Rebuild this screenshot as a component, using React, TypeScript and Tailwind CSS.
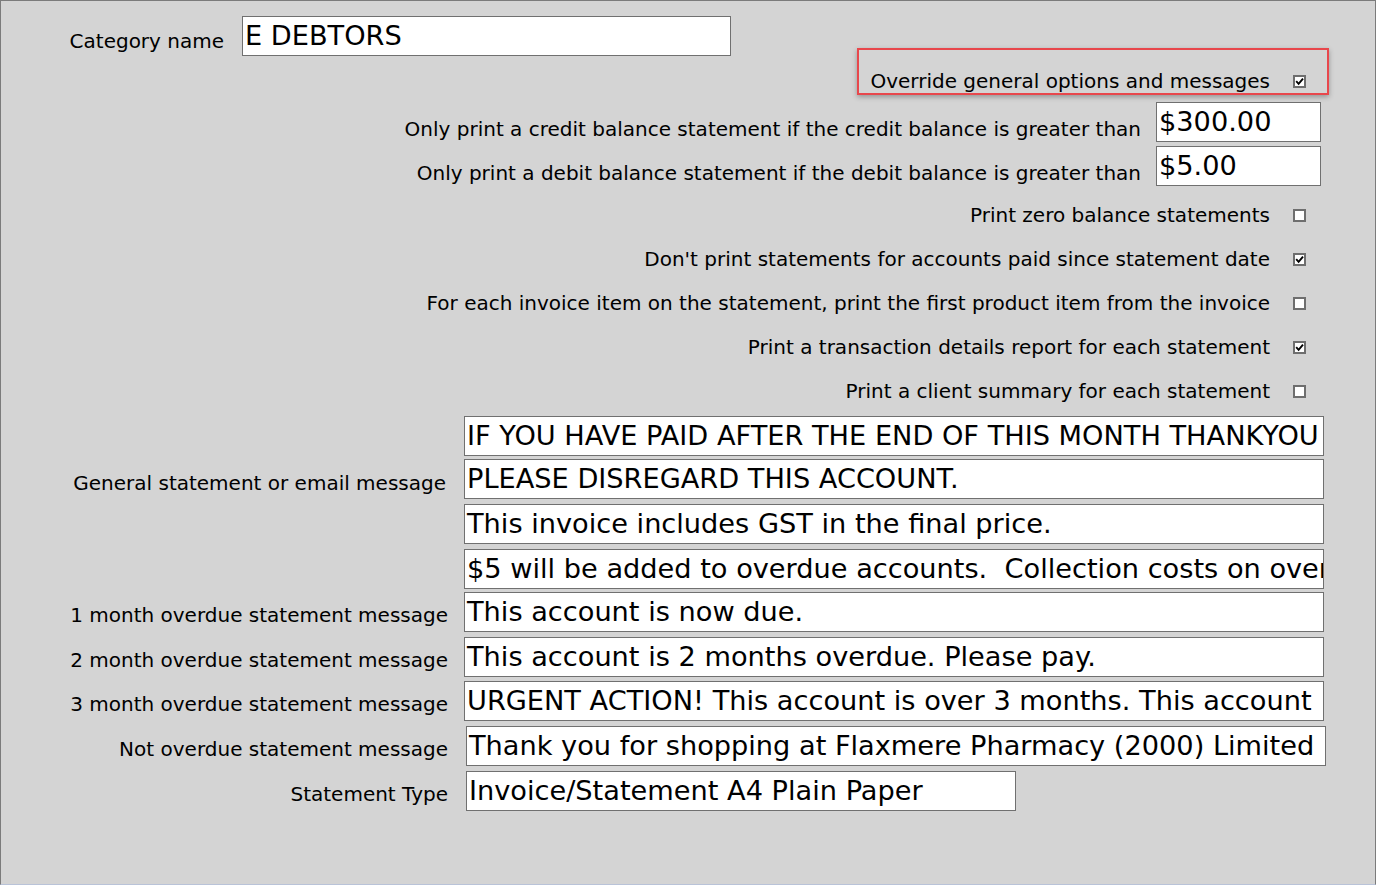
import React from 'react'

// Champ de saisie en lecture seule, comme dans l'écran d'origine
const Field = ({ text, className }: { text: string; className: string }) => (
  <div
    className={`h-[40px] shrink-0 overflow-hidden whitespace-pre border border-[#707070] bg-white pl-[2px] pt-[5px] text-[27.2px] leading-[27px] text-black ${className}`}
  >
    {text}
  </div>
)

const Check = ({ checked }: { checked: boolean }) => (
  <span className="ml-[23px] flex h-[13px] w-[13px] shrink-0 items-center justify-center border-2 border-[#6e6e6e] bg-white">
    {checked && (
      <svg width="9" height="9" viewBox="0 0 9 9">
        <path d="M1.2 4.2 L3.6 6.8 L8 1.6" stroke="#000" strokeWidth="1.9" fill="none" />
      </svg>
    )}
  </span>
)

const options = [
  { label: 'Print zero balance statements', checked: false },
  { label: "Don't print statements for accounts paid since statement date", checked: true },
  { label: 'For each invoice item on the statement, print the first product item from the invoice', checked: false },
  { label: 'Print a transaction details report for each statement', checked: true },
  { label: 'Print a client summary for each statement', checked: false },
]

const general = [
  'IF YOU HAVE PAID AFTER THE END OF THIS MONTH THANKYOU',
  'PLEASE DISREGARD THIS ACCOUNT.',
  'This invoice includes GST in the final price.',
  '$5 will be added to overdue accounts.  Collection costs on overdue accounts',
]

export default function App() {
  return (
    <div className="h-[885px] w-[1376px] border-b border-l border-r border-t border-[#7b7b7b] border-b-[#b9c3d8] bg-[#d4d4d4] font-['DejaVu_Sans',Verdana,sans-serif] text-[20px] leading-[20px] text-black">
      {/* Nom de catégorie */}
      <div className="mt-[15px] flex">
        <div className="w-[223px] pt-[15px] text-right">Category name</div>
        <Field className="ml-[18px] w-[489px]" text="E DEBTORS" />
      </div>

      {/* Override */}
      <div className="relative mt-[12px] flex h-[26px] items-center justify-end pr-[69px]">
        <span>Override general options and messages</span>
        <Check checked />
        <div className="pointer-events-none absolute left-[856px] top-[-20px] h-[47px] w-[472px] border-2 border-[#e8474c] shadow-[0_2px_5px_rgba(0,0,0,0.3)]" />
      </div>

      <div className="mt-[8px] flex h-[40px] justify-end pr-[54px]">
        <div className="pt-[17px]">Only print a credit balance statement if the credit balance is greater than</div>
        <Field className="ml-[15px] w-[165px]" text="$300.00" />
      </div>
      <div className="mt-[4px] flex h-[40px] justify-end pr-[54px]">
        <div className="pt-[17px]">Only print a debit balance statement if the debit balance is greater than</div>
        <Field className="ml-[15px] w-[165px]" text="$5.00" />
      </div>

      <div className="mt-[7px]">
        {options.map((o) => (
          <div key={o.label} className="flex h-[44px] items-center justify-end pr-[69px]">
            <span>{o.label}</span>
            <Check checked={o.checked} />
          </div>
        ))}
      </div>

      {/* Messages généraux */}
      <div className="mt-[3px] flex">
        <div className="w-[445px] pt-[57px] text-right">General statement or email message</div>
        <div className="ml-[18px] flex flex-col">
          <Field className="w-[860px]" text={general[0]} />
          <Field className="mt-[3px] w-[860px]" text={general[1]} />
          <Field className="mt-[5px] w-[860px]" text={general[2]} />
          <Field className="mt-[5px] w-[860px]" text={general[3]} />
        </div>
      </div>

      <div className="mt-[3px] flex">
        <div className="w-[447px] pt-[13px] text-right">1 month overdue statement message</div>
        <Field className="ml-[16px] w-[860px]" text="This account is now due." />
      </div>
      <div className="mt-[5px] flex">
        <div className="w-[447px] pt-[13px] text-right">2 month overdue statement message</div>
        <Field className="ml-[16px] w-[860px]" text="This account is 2 months overdue. Please pay." />
      </div>
      <div className="mt-[4px] flex">
        <div className="w-[447px] pt-[13px] text-right">3 month overdue statement message</div>
        <Field className="ml-[16px] w-[860px]" text="URGENT ACTION! This account is over 3 months. This account" />
      </div>
      <div className="mt-[5px] flex">
        <div className="w-[447px] pt-[13px] text-right">Not overdue statement message</div>
        <Field className="ml-[18px] w-[860px]" text="Thank you for shopping at Flaxmere Pharmacy (2000) Limited" />
      </div>
      <div className="mt-[5px] flex">
        <div className="w-[447px] pt-[13px] text-right">Statement Type</div>
        <Field className="ml-[18px] w-[550px]" text="Invoice/Statement A4 Plain Paper" />
      </div>
    </div>
  )
}
